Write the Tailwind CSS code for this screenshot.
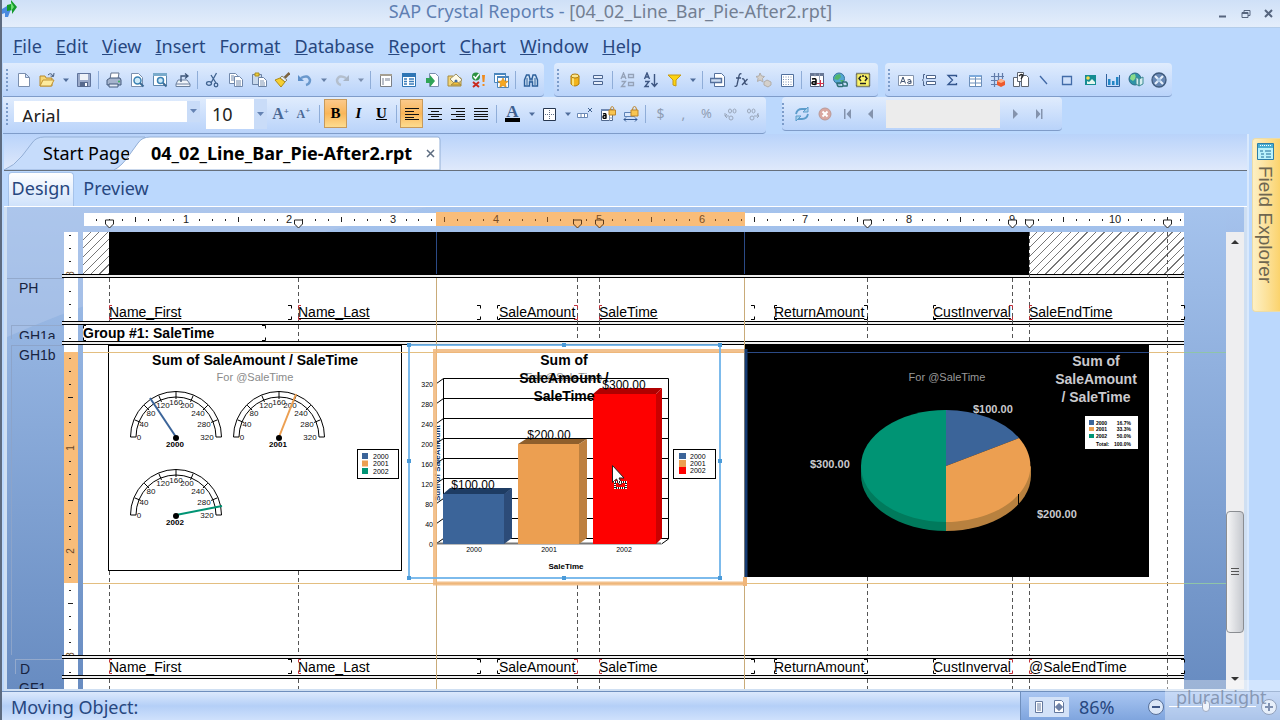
<!DOCTYPE html>
<html lang="en">
  <head>
    <meta charset="UTF-8" />
    <meta name="viewport" content="width=device-width, initial-scale=1.0" />
    <script src="https://cdn.jsdelivr.net/npm/@tailwindcss/browser@4"></script>
    <title>SAP Crystal Reports - [04_02_Line_Bar_Pie-After2.rpt]</title>
  </head>

  <body class="h-screen overflow-hidden bg-[#bbd8fd] font-['Noto_Sans','Open_Sans',sans-serif] text-[#27477f]">
    <div class="flex h-screen flex-col border-l-2 border-[#5d6b80]">
      <!-- Title bar -->
      <header class="flex h-7 flex-none items-center border-b border-[#b4cdea] bg-linear-to-b from-[#cfe0f7] to-[#e4eefb]">
        <svg class="size-5 flex-none self-start" viewBox="0 0 20 20">
          <path d="M0 9l5-3v4l4-1-3 8-3 0 0-4-3 1z" fill="#4a8be0" />
          <path d="M5 5l4-1V0l6 7-5 7V10l-5 1z" fill="#159a2c" />
          <path d="M9 2l3 5-3 4z" fill="#6be070" />
        </svg>
        <h1 class="flex-1 pb-[6px] pr-3 text-center text-[18px] leading-5 text-[#5f7fb2]">SAP Crystal Reports - <span class="text-[#737f92]">[04_02_Line_Bar_Pie-After2.rpt]</span></h1>
        <div class="flex text-[#56657e]">
          <button class="grid h-6 w-[23px] place-items-center" aria-label="Minimize"><svg class="size-3" viewBox="0 0 12 12"><path d="M2 8.500h7" stroke="currentColor" stroke-width="2" /></svg></button>
          <button class="grid h-6 w-[23px] place-items-center" aria-label="Restore"><svg class="size-3" viewBox="0 0 12 12" fill="none" stroke="currentColor"><path d="M4 4V2.500h6v5H8" /><path d="M2 4.500h6v5H2z M2 5.500h6" /></svg></button>
          <button class="grid h-6 w-[23px] place-items-center" aria-label="Close"><svg class="size-3" viewBox="0 0 12 12"><path d="M2 2l7 7M9 2L2 9" stroke="currentColor" stroke-width="2" /></svg></button>
        </div>
      </header>

      <!-- Menu -->
      <nav class="flex h-[35px] flex-none items-center gap-[14px] pl-[11px] pt-[2px] text-[18px]">
        <a href="#"><u>F</u>ile</a>
        <a href="#"><u>E</u>dit</a>
        <a href="#"><u>V</u>iew</a>
        <a href="#"><u>I</u>nsert</a>
        <a href="#">Form<u>a</u>t</a>
        <a href="#"><u>D</u>atabase</a>
        <a href="#"><u>R</u>eport</a>
        <a href="#"><u>C</u>hart</a>
        <a href="#"><u>W</u>indow</a>
        <a href="#"><u>H</u>elp</a>
      </nav>

      <!-- Toolbars, first row -->
      <div class="flex h-[34px] flex-none [&_button]:grid [&_button]:h-[26px] [&_button]:w-[23px] [&_button]:place-items-center [&_svg]:size-4 [&_i]:mx-[3px] [&_i]:h-[18px] [&_i]:w-px [&_i]:bg-[#8fadd8] [&_b]:mr-1 [&_b]:h-[22px] [&_b]:w-0 [&_b]:border-l-2 [&_b]:border-dotted [&_b]:border-[#7c9cca] [&_button.drop]:w-[14px]">
        <div class="ml-px flex w-[541px] items-center rounded-r border-b border-[#7f9cc9] bg-linear-to-b from-[#e0ecfd] to-[#b9d3fa] pl-[3px]">
          <b></b>
          <button aria-label="New"><svg viewBox="0 0 16 16"><path d="M2.500 1.500h7l4 4v9h-11z M9.500 1.500v4h4" fill="#fff" stroke="#7b8fae" /></svg></button>
          <button aria-label="Open"><svg viewBox="0 0 16 16"><path d="M1 14V4h5l1 2h6v8z" fill="#f7d774" stroke="#b8892a" /><path d="M1 14l3-6h11l-3 6z" fill="#fdeb9f" stroke="#c19334" /><path d="M9 3q3-3 5 1M15 1l-.5 3.500-3-.5" fill="none" stroke="#445a7c" /></svg></button>
          <button class="drop" aria-label="Open recent"><svg viewBox="0 0 16 16"><path d="M5 6.500h6l-3 3.500z" fill="#506d9b" /></svg></button>
          <button aria-label="Save"><svg viewBox="0 0 16 16"><path d="M1.500 1.500h13v13h-13z" fill="#9aa9c8" stroke="#60749c" /><path d="M4 2h8v6H4z" fill="#eef2f8" /><path d="M4 10h8v5H4z" fill="#586a8d" /><path d="M9 11h2v3H9z" fill="#fff" /></svg></button>
          <i></i>
          <button aria-label="Print"><svg viewBox="0 0 16 16"><path d="M5 1h8l-1 6H4z" fill="#fff" stroke="#64748f" /><path d="M1 8l3-2h10l1 2v5H1z" fill="#a5b4cd" stroke="#445a7c" /><path d="M3 12h9v3H3z" fill="#dfe8f5" stroke="#445a7c" /><circle cx="13" cy="9.500" r="1" fill="#36b45a" /></svg></button>
          <button aria-label="Print preview"><svg viewBox="0 0 16 16"><path d="M2.500 1.500h7l4 4v9h-11z" fill="#fff" stroke="#7b8fae" /><circle cx="8.500" cy="8.500" r="3.500" fill="#cfeaf8" stroke="#3b82b4" stroke-width="1.500" /><path d="M11 11l3.500 3.500" stroke="#3b6a94" stroke-width="2" /></svg></button>
          <button aria-label="HTML preview"><svg viewBox="0 0 16 16"><path d="M1.500 1.500h13v12h-13z" fill="#fff" stroke="#5f87ad" /><path d="M1 1h14v3H1z" fill="#79aacb" /><circle cx="8.500" cy="8.500" r="3" fill="#cfeaf8" stroke="#3b82b4" stroke-width="1.500" /><path d="M11 11l3.500 3.500" stroke="#3b6a94" stroke-width="2" /></svg></button>
          <button aria-label="Export"><svg viewBox="0 0 16 16" fill="none" stroke="#6a7f9d"><path d="M3 8h9l3 4v2.500H1V12z" fill="#f0f4fa" /><path d="M1 12h14" /><path d="M6 10V4h6M10 1.500L13 4l-3 2.500" stroke="#3d5578" stroke-width="1.300" /></svg></button>
          <i></i>
          <button aria-label="Cut"><svg viewBox="0 0 16 16" fill="none" stroke="#3f628f" stroke-width="1.300"><path d="M11.500 1L6 11M6 3l5 8" /><ellipse cx="4" cy="11.500" rx="2.500" ry="1.800" /><circle cx="11" cy="13" r="1.800" /></svg></button>
          <button aria-label="Copy"><svg viewBox="0 0 16 16" fill="#fff" stroke="#7188ab"><path d="M1.500 1.500h6l2 2v8h-8z" /><path d="M6.500 4.500h5l3 3v7h-8z" /><path d="M3 4h3M3 6h3M3 8h3M8 9h5M8 11h5M8 13h5" /></svg></button>
          <button aria-label="Paste"><svg viewBox="0 0 16 16"><path d="M1.500 2.500h9v10h-9z" fill="#c9d9ec" stroke="#6c83a5" /><path d="M4 1h4v3H4z" fill="#f0cd36" stroke="#a98d22" /><path d="M7.500 5.500h5l3 3v6h-8z" fill="#fff" stroke="#6c83a5" /><path d="M9 9h4M9 11h5M9 13h5" stroke="#7f95b5" /></svg></button>
          <button aria-label="Format painter"><svg viewBox="0 0 16 16"><path d="M15.500 1l-5 5" stroke="#7b6340" stroke-width="2.500" /><path d="M8 4l5 4-2 2-5-4z" fill="#e7eaf0" stroke="#8a8a70" /><path d="M1 8l5-2 5 4-4 5z" fill="#f6cf33" stroke="#af8a16" /></svg></button>
          <button aria-label="Undo"><svg viewBox="0 0 16 16"><path d="M4 6q7-4 9 2 0 4-4 5" fill="none" stroke="#6a98cc" stroke-width="2.500" /><path d="M1 3v6h6z" fill="#5d8fc9" /></svg></button>
          <button class="drop" aria-label="Undo list"><svg viewBox="0 0 16 16"><path d="M5 6.500h6l-3 3.500z" fill="#6680a8" /></svg></button>
          <button aria-label="Redo"><svg viewBox="0 0 16 16"><path d="M12 6q-7-4-9 2 0 4 4 5" fill="none" stroke="#b4bfcd" stroke-width="2.500" /><path d="M15 3v6H9z" fill="#a9b5c5" /></svg></button>
          <button class="drop" aria-label="Redo list"><svg viewBox="0 0 16 16"><path d="M5 6.500h6l-3 3.500z" fill="#7c90b0" /></svg></button>
          <i></i>
          <button aria-label="Toggle preview panel"><svg viewBox="0 0 16 16"><path d="M2.500 2.500h11v12h-11z" fill="#fff" stroke="#7b7f86" /><path d="M2 2h12v2H2z" fill="#a59f92" /><path d="M4 6h2v7H4zM7 6h5v3H7z" fill="#b9bec8" /></svg></button>
          <button aria-label="Field explorer"><svg viewBox="0 0 16 16"><path d="M1.500 1.500h13v13h-13z" fill="#fff" stroke="#2e75b5" /><path d="M1 1h14v4H1z" fill="#2e75b5" /><path d="M3 7h3M3 9.500h3M3 12h3M8 7h5M8 9.500h5M8 12h5" stroke="#3b7cba" stroke-width="1.300" /></svg></button>
          <button aria-label="Report explorer"><svg viewBox="0 0 16 16"><path d="M5.500 1.500h6l3 3v10h-9z" fill="#fff" stroke="#7b8fae" /><path d="M2 6h4V3l5 6-5 6v-4H2z" fill="#30a457" /></svg></button>
          <button aria-label="Repository explorer"><svg viewBox="0 0 16 16"><path d="M1 14V4h5l1 2h7v8z" fill="#f2d477" stroke="#a58a3f" /><path d="M3 7l6-5 6 6-6 5z" fill="#fffbe6" stroke="#9b9064" /><path d="M4 13l5-4 5 4z" fill="#f1bf39" stroke="#a58a3f" /><circle cx="9" cy="9" r="1.500" fill="#406ba5" /></svg></button>
          <button aria-label="Dependency checker"><svg viewBox="0 0 16 16"><circle cx="6" cy="4.500" r="4" fill="#2b9141" /><path d="M3.500 4l2 2.500L9 2" fill="none" stroke="#fff" stroke-width="1.500" /><path d="M3 10l6 5M9 10l-6 5" stroke="#c8291d" stroke-width="2" /><path d="M12 3h3l-.6 7h-1.800zM12.500 12h2v2h-2z" fill="#ef8a1d" /></svg></button>
          <button aria-label="Workbench"><svg viewBox="0 0 16 16"><path d="M1.500 1.500h11v9h-11zM4.500 4.500h11v11h-11z" fill="#fff" stroke="#4a86bd" /><path d="M1 1h12v2H1zM4 4h12v2H4z" fill="#4a86bd" /><path d="M10 6l1.500 3 3.500.4-2.600 2.300.8 3.500L10 13.500 6.800 15.200l.8-3.500L5 9.400 8.500 9z" fill="#f6a821" stroke="#c77d10" stroke-width=".6" /></svg></button>
          <i></i>
          <button aria-label="Find"><svg viewBox="0 0 16 16"><path d="M1.500 14V8l2-5h2.500l1 4h2l1-4h2.500l2 5v6h-5v-4h-3v4z" fill="#cfe2f5" stroke="#2c5f9a" stroke-width="1.400" /><path d="M7 7v3M9 7v3M4 6v7M12 6v7" stroke="#2c5f9a" /></svg></button>
        </div>

        <div class="ml-[10px] flex w-[324px] items-center rounded border-b border-[#7f9cc9] bg-linear-to-b from-[#e0ecfd] to-[#b9d3fa] pl-[3px]">
          <b></b>
          <button aria-label="Database expert"><svg viewBox="0 0 16 16"><path d="M4 4v8q4 4 8 0V4z" fill="#f2b41c" stroke="#b07c0b" /><path d="M5 5v8l2 1V5z" fill="#fbe27a" /><ellipse cx="8" cy="4" rx="4" ry="2" fill="#fbe58d" stroke="#b07c0b" /></svg></button>
          <button aria-label="Group expert"><svg viewBox="0 0 16 16" fill="#e6eefb" stroke="#4b6590"><path d="M3.500 3.500h9v3h-9zM3.500 9.500h9v3h-9z" /></svg></button>
          <i></i>
          <button aria-label="Group sort"><svg viewBox="0 0 16 16" fill="none" stroke="#95a2b8" stroke-width="1.300"><path d="M1 7l2.500-6L6 7M2 5h3M1.500 9.500h4l-4 5h4M8.500 2.500h5v3h-5zM8.500 10.500h5v3h-5z" /></svg></button>
          <button aria-label="Sort"><svg viewBox="0 0 16 16" fill="none" stroke="#3d5682" stroke-width="1.400"><path d="M1.500 7L4 1l2.500 6M2.500 5h3M2 9.500h4l-4 5h4M11.500 2v12M8.500 11l3 3.500 3-3.500" /></svg></button>
          <button aria-label="Select expert"><svg viewBox="0 0 16 16"><path d="M2 3h13l-5 5v6l-3-1V8z" fill="#fbd312" stroke="#c79a12" /></svg></button>
          <button class="drop" aria-label="Selection list"><svg viewBox="0 0 16 16"><path d="M5 6.500h6l-3 3.500z" fill="#506d9b" /></svg></button>
          <i></i>
          <button aria-label="Section expert"><svg viewBox="0 0 16 16" fill="#fff" stroke="#55709c"><path d="M4.500 1.500h7l3 3v10h-10z" /><path d="M.5 6.500h11v4H.5z" fill="#cddcf2" stroke-width="1.400" /></svg></button>
          <button aria-label="Formula workshop"><svg viewBox="0 0 16 16" fill="none" stroke="#3c5075" stroke-width="1.300"><path d="M8.500 2Q6.500 1 6 4L4 13q-.5 2-2.500 1M3 6h5M9 7q2-1 2.500 2l.5 2q.5 2 2.500 1M14.500 7L9 13" /></svg></button>
          <button aria-label="OLAP expert"><svg viewBox="0 0 16 16" fill="#d4d0cb" stroke="#b1adaa"><path d="M4 1l1.500 3 3 .5-2 2L7 10 4 8 1.500 9.500l.5-3-2-2 3-.5z" /><path d="M8 10l3-2 4 2v3l-3 2-4-2z" /></svg></button>
          <button aria-label="Grid"><svg viewBox="0 0 16 16"><path d="M2.500 2.500h12v12h-12z" fill="#fff" stroke="#52719e" /><path d="M4 5h9M4 7.500h9M4 10h9M4 12.500h9" stroke="#7e93b4" stroke-dasharray="1 1.500" /></svg></button>
          <i></i>
          <button aria-label="Format field"><svg viewBox="0 0 16 16"><path d="M1.500 1.500h13v13h-13z" fill="#fff" stroke="#4f5f7e" /><path d="M1 1h14v3H1z" fill="#697996" /><path d="M6 1.500v3M10.500 1.500v13M6 11v3" stroke="#9aa6ba" /><path d="M3 7q4-1 4 1v4q-4 1-4-1t4-1" fill="none" stroke="#000" stroke-width="1.500" /><path d="M8 11.500h7M11.500 8v7" stroke="#d4324a" /></svg></button>
          <button aria-label="Hyperlink"><svg viewBox="0 0 16 16"><circle cx="7" cy="6.500" r="5.500" fill="#53a6d1" stroke="#38749d" /><path d="M4 3l4-1 1 3-3 3-4-1zM8 8l4 0-2 3z" fill="#52b66b" /><path d="M5 11h4q2 0 2 2t-2 1.500H6.500Q5 14 5 11zM10 10h4q2 1 1 4h-4" fill="none" stroke="#2e6f74" stroke-width="1.400" /></svg></button>
          <button aria-label="Highlighting"><svg viewBox="0 0 16 16"><path d="M1.500 1.500h13v13h-13z" fill="#fbf36a" stroke="#222" stroke-width="1.500" stroke-dasharray="1 1" /><path d="M6 4L4 6.500 6 9M10 4l2 2.500L10 9M8 3v2M5 11.500h6" fill="none" stroke="#222" stroke-width="1.500" /></svg></button>
        </div>

        <div class="ml-[7px] flex w-[287px] items-center rounded border-b border-[#7f9cc9] bg-linear-to-b from-[#e0ecfd] to-[#b9d3fa] pl-[3px]">
          <b></b>
          <button aria-label="Text object"><svg viewBox="0 0 16 16"><path d="M.5 3.500h15v10H.5z" fill="#fff" stroke="#8494ad" /><path d="M2.500 11.500L5 5l2.500 6.500M3.500 9.500h3M9.500 8q3.500-1.500 3.500 1v2.500M13 9.500q-4 0-3.500 1.500t3.500 0" fill="none" stroke="#3c4f6e" /></svg></button>
          <button aria-label="Insert group"><svg viewBox="0 0 16 16" fill="#fff" stroke="#4d648a"><path d="M5.500 3.500h9v3h-9zM5.500 9.500h9v3h-9z" /><path d="M4 2.500H2.500v4L1.500 8l1 1.500v4H4" fill="none" /></svg></button>
          <button aria-label="Insert summary"><svg viewBox="0 0 16 16"><path d="M12.500 5V3.500H4L8.500 8 4 12.500h8.500V11" fill="none" stroke="#34568e" stroke-width="1.300" /></svg></button>
          <button aria-label="Insert cross-tab"><svg viewBox="0 0 16 16"><path d="M2.500 3.500h12v11h-12z" fill="#fff" stroke="#6c8fba" /><path d="M2.500 7h12M8.500 4v10M2.500 11h12" stroke="#6c8fba" /><path d="M2 3h12v2H2z" fill="#7eaadb" /></svg></button>
          <button aria-label="Insert OLAP grid"><svg viewBox="0 0 16 16"><path d="M1 4.500h13M1 8.500h9M1 12.500h7M4.500 1v14M8.500 1v9M12.500 1v6" stroke="#627caa" stroke-width="1.200" /><path d="M7 9l4-2 4 2v4l-4 2-4-2z" fill="#ee5a2d" /><path d="M7 9l4-2 4 2-4 2z" fill="#fcb58c" /></svg></button>
          <button aria-label="Insert subreport"><svg viewBox="0 0 16 16" fill="#fff" stroke="#5e6672"><path d="M.5 5.500h6v9h-6z" /><path d="M4.500.5h6v9h-6z" /><path d="M8.500 3.500h5l2 2v9h-7z" /><path d="M6 4q3-3 4 0l-2 3" fill="none" stroke="#222" stroke-width="1.300" /></svg></button>
          <button aria-label="Insert line"><svg viewBox="0 0 16 16"><path d="M4 4l7 8" stroke="#4068a6" stroke-width="1.300" /></svg></button>
          <button aria-label="Insert box"><svg viewBox="0 0 16 16"><path d="M3.500 4.500h9v8h-9z" fill="#cfe0fa" stroke="#426ba8" stroke-width="1.300" /></svg></button>
          <button aria-label="Insert picture"><svg viewBox="0 0 16 16"><path d="M3 3h11v10H3z" fill="#158c92" /><circle cx="6" cy="6" r="1.800" fill="#f8dc4a" /><path d="M5 12V9l2 1 3-3 3 3v2z" fill="#e6f7ee" /></svg></button>
          <button aria-label="Insert chart"><svg viewBox="0 0 16 16"><path d="M1.500 2v12.500h13V3" fill="none" stroke="#32629e" /><path d="M3 7h2.500v6H3zM7 9h2.500v4H7zM11 5h2.500v8H11z" fill="#2387c6" /></svg></button>
          <button aria-label="Insert map"><svg viewBox="0 0 16 16"><circle cx="7" cy="7" r="6" fill="#2f93a8" stroke="#2c6a86" /><path d="M3 3l4-1 1 4-3 3-3-2z" fill="#8bdc8a" /><path d="M8 5l3 2v7l-3-2zM11 7l4-2v7l-4 2z" fill="#d4edef" stroke="#3c8b92" /></svg></button>
          <button aria-label="Insert flash"><svg viewBox="0 0 16 16"><circle cx="8" cy="8" r="7" fill="#6787b3" stroke="#3f5a7c" stroke-width="1.300" /><path d="M4 4l8 8M12 4l-8 8" stroke="#e7f0fb" stroke-width="2.200" /><circle cx="8" cy="8" r="2" fill="#a9c8e8" /></svg></button>
        </div>
      </div>

      <!-- Toolbars, second row -->
      <div class="flex h-[37px] flex-none [&_button]:grid [&_button]:h-[29px] [&_button]:w-[23px] [&_button]:place-items-center [&_svg]:size-4 [&_i]:mx-[3px] [&_i:nth-of-type(odd)]:mx-1 [&_i]:h-[18px] [&_i]:w-px [&_i]:bg-[#8fadd8] [&_b]:mr-[6px] [&_b]:h-[22px] [&_b]:w-0 [&_b]:border-l-2 [&_b]:border-dotted [&_b]:border-[#7c9cca] [&_button.drop]:w-[13px]">
        <div class="ml-px flex w-[763px] items-center rounded-r border-b border-[#7f9cc9] bg-linear-to-b from-[#e0ecfd] to-[#b9d3fa] pb-[3px] pl-[3px]">
          <b></b>
          <div class="relative mr-[6px] mt-1 h-[21px] w-[186px] flex-none self-start overflow-hidden bg-white">
            <select aria-label="Font" class="h-[31px] w-full appearance-none border-r-[13px] border-[#c9dcf8] pl-2 text-[18px] leading-[31px] text-[#222]"><option>Arial</option></select>
            <svg class="pointer-events-none absolute right-0 top-[4px] !size-3" viewBox="0 0 12 12"><path d="M2 4h7L5.500 8z" fill="#6583b3" /></svg>
          </div>
          <div class="relative mr-[2px] h-[30px] w-[61px] flex-none bg-white">
            <select aria-label="Font size" class="h-[30px] w-full appearance-none border-r-[13px] border-[#c9dcf8] pl-[6px] text-[18px] leading-[30px] text-[#222]"><option>10</option></select>
            <svg class="pointer-events-none absolute right-0 top-[9px] !size-3" viewBox="0 0 12 12"><path d="M2 4h7L5.500 8z" fill="#6583b3" /></svg>
          </div>
          <button aria-label="Grow font" class="font-['Liberation_Serif',serif] text-[16px] font-bold text-[#4a6894]"><span>A<sup class="text-[9px]">+</sup></span></button>
          <button aria-label="Shrink font" class="font-['Liberation_Serif',serif] text-[12px] font-bold text-[#4a6894]"><span>A<sup class="text-[9px]">+</sup></span></button>
          <i></i>
          <button aria-label="Bold" class="border border-[#c79a5c] bg-linear-to-b from-[#fbc98a] via-[#f9b659] to-[#fddc8f] font-['Liberation_Serif',serif] text-[15px] font-bold text-black">B</button>
          <button aria-label="Italic" class="font-['Liberation_Serif',serif] text-[15px] font-bold italic text-black">I</button>
          <button aria-label="Underline" class="font-['Liberation_Serif',serif] text-[15px] font-bold text-black underline">U</button>
          <i></i>
          <button aria-label="Align left" class="border border-[#c79a5c] bg-linear-to-b from-[#fbc98a] via-[#f9b659] to-[#fddc8f]"><svg viewBox="0 0 16 16"><path d="M1 2.500h14M1 5.500h9M1 8.500h14M1 11.500h9M1 13.500h14" stroke="#111" /></svg></button>
          <button aria-label="Align center"><svg viewBox="0 0 16 16"><path d="M1 2.500h14M4 5.500h8M1 8.500h14M4 10.500h8M1 13.500h14" stroke="#111" /></svg></button>
          <button aria-label="Align right"><svg viewBox="0 0 16 16"><path d="M1 2.500h14M6 5.500h9M1 8.500h14M6 10.500h9M1 13.500h14" stroke="#111" /></svg></button>
          <button aria-label="Justify"><svg viewBox="0 0 16 16"><path d="M1 2.500h14M1 5.500h14M1 8.500h14M1 10.500h14M1 13.500h14" stroke="#111" /></svg></button>
          <i></i>
          <button aria-label="Font color" class="font-['Liberation_Serif',serif] text-[17px] font-bold text-[#3f608f]"><span class="h-4 border-b-4 border-black px-px leading-3">A</span></button>
          <button class="drop" aria-label="Font color list"><svg viewBox="0 0 16 16"><path d="M5 6.500h6l-3 3.500z" fill="#506d9b" /></svg></button>
          <button aria-label="Borders"><svg viewBox="0 0 16 16"><path d="M2.500 2.500h12v12h-12z" fill="#fff" stroke="#26364f" /><path d="M4 8.500h9M8.500 4v9" stroke="#5f6e86" stroke-dasharray="1 1" /></svg></button>
          <button class="drop" aria-label="Border list"><svg viewBox="0 0 16 16"><path d="M5 6.500h6l-3 3.500z" fill="#506d9b" /></svg></button>
          <button aria-label="Suppress"><svg viewBox="0 0 16 16" fill="#fff" stroke="#6b88b4"><path d="M.5 7.500h10v4H.5zM4 7.500v4M7.500 7.500v4" /><path d="M11 2l4 4M15 2l-4 4" stroke="#3f608f" /></svg></button>
          <button aria-label="Lock format"><svg viewBox="0 0 16 16"><path d="M1.500 3.500h11v11h-11z" fill="#fff" stroke="#51688d" /><path d="M1 3h12v2H1z" fill="#6f88b1" /><path d="M9.500 5v10M9 12h4" stroke="#8799b5" /><path d="M3 8q3-1 3 1v3q-3 1-3-1t3-1" fill="none" stroke="#000" stroke-width="1.400" /><path d="M9 4h6.500v5H9z" fill="#f8c551" stroke="#bd852a" /><path d="M10.500 4q0-3.500 1.700-3.500T14 4" fill="none" stroke="#bd852a" /></svg></button>
          <button aria-label="Lock size"><svg viewBox="0 0 16 16"><path d="M1.500 6.500h10v4h-10z" fill="#dbe8fb" stroke="#5e83b8" /><path d="M1 13.500h13M3 11.500l-2 2 2 2M12 11.500l2 2-2 2" fill="none" stroke="#33578f" /><path d="M8 4h7v6H8z" fill="#f8c551" stroke="#bd852a" /><path d="M9.500 4q0-3.500 2-3.500t2 3.500" fill="none" stroke="#bd852a" /></svg></button>
          <i></i>
          <button aria-label="Currency" class="text-[14px] text-[#8f9db3]">$</button>
          <button aria-label="Thousands" class="text-[14px] text-[#8f9db3]">,</button>
          <button aria-label="Percent" class="text-[13px] text-[#8f9db3]">%</button>
          <button aria-label="Increase decimals"><svg viewBox="0 0 16 16" fill="none" stroke="#9aa7bb"><ellipse cx="8" cy="5" rx="1.500" ry="2" /><ellipse cx="12.500" cy="5" rx="1.500" ry="2" /><path d="M3 7v3h4M5 8l-2 2 2 2" /><ellipse cx="9" cy="12" rx="2" ry="2" /></svg></button>
          <button aria-label="Decrease decimals"><svg viewBox="0 0 16 16" fill="none" stroke="#9aa7bb"><ellipse cx="4" cy="5" rx="1.500" ry="2" /><ellipse cx="8.500" cy="5" rx="1.500" ry="2" /><path d="M13 7v3H9M12 8l2 2-2 2" /><ellipse cx="7" cy="12" rx="2" ry="2" /></svg></button>
        </div>

        <div class="ml-4 flex h-[34px] items-center rounded border-b border-[#7f9cc9] bg-linear-to-b from-[#e0ecfd] to-[#b9d3fa]">
          <b></b>
          <button aria-label="Refresh"><svg viewBox="0 0 16 16" fill="none" stroke="#5c9ccb" stroke-width="1.800"><path d="M2 8q1-5 6-5h4M14 8q-1 5-6 5H4" /><path d="M14 1v5H9zM2 15v-5h5z" fill="#a9d2ec" stroke-width="1" /></svg></button>
          <button aria-label="Stop"><svg viewBox="0 0 16 16"><circle cx="8" cy="8" r="6" fill="#d9a7a0" stroke="#b99a99" /><path d="M5.500 5.500l5 5M10.500 5.500l-5 5" stroke="#fff" stroke-width="2" /></svg></button>
          <button aria-label="First page"><svg viewBox="0 0 16 16" fill="#8493ad"><path d="M4 3h1.500v10H4zM11 3v10L6.500 8z" /></svg></button>
          <button aria-label="Previous page"><svg viewBox="0 0 16 16" fill="#8493ad"><path d="M10 3v10L5 8z" /></svg></button>
          <input aria-label="Page" disabled class="mx-1 h-[28px] w-[114px] bg-[#ececec] px-1 text-sm" />
          <button aria-label="Next page"><svg viewBox="0 0 16 16" fill="#8493ad"><path d="M5 3v10l5-5z" /></svg></button>
          <button aria-label="Last page" class="mr-[12px]"><svg viewBox="0 0 16 16" fill="#8493ad"><path d="M5 3v10l4.500-5zM10 3h1.500v10H10z" /></svg></button>
        </div>
      </div>

      <div class="flex min-h-0 flex-1">
        <div class="flex min-w-0 flex-1 flex-col pl-[2px]">
          <!-- Document tabs -->
          <div class="relative flex h-[37px] flex-none items-end border-b border-[#66707c] bg-linear-to-b from-[#b9d3fa] to-[#dfe9fb] text-[18px] text-black">
            <svg class="absolute bottom-0 left-0 h-[34px] w-[440px]" viewBox="0 0 440 34">
              <path d="M0 34Q10 30 18 20L28 7Q32 1 40 1h101v33z" fill="#c6dcfb" stroke="#93afd6" />
              <path d="M110 34Q118 30 126 18L134 7Q138 1 146 1H434q2 0 2 3v30z" fill="#fff" stroke="#93afd6" />
            </svg>
            <button class="relative ml-[39px] h-[33px] w-[86px] overflow-hidden whitespace-nowrap text-left">Start Page</button>
            <button class="relative ml-[22px] h-[33px] w-[267px] whitespace-nowrap text-left font-bold">04_02_Line_Bar_Pie-After2.rpt</button>
            <button class="relative ml-[7px] h-8 text-[#5d6c80]" aria-label="Close tab"><svg class="size-3" viewBox="0 0 12 12"><path d="M2 2l7 7M9 2L2 9" stroke="currentColor" stroke-width="1.500" /></svg></button>
          </div>

          <!-- View tabs -->
          <div class="flex h-9 flex-none items-end border-b border-white pl-1 text-[18px]">
            <button class="h-[34px] w-[66px] whitespace-nowrap rounded-t border border-b-0 border-[#a6c3ea] bg-linear-to-b from-white to-[#cfe2fb] pb-[2px]">Design</button>
            <button class="h-[34px] w-[84px] pb-[2px]">Preview</button>
          </div>

          <!-- Report designer -->
          <main class="flex min-h-0 flex-1 border-x-[3px] border-b-2 border-[#cfdff2] font-['Liberation_Sans',sans-serif] text-black">
            <div class="relative flex min-w-0 flex-1 flex-col overflow-hidden bg-linear-to-b from-[#a5c3ed] to-[#688cc1]">
              <svg class="absolute left-0 top-0 h-[130px] w-full" viewBox="0 0 1219 130" preserveAspectRatio="none"><path d="M0 130Q160 60 420 0H0z" fill="#b6c9ea" opacity=".45" /></svg>

              <div class="relative h-[25px] flex-none pl-[77px] pr-[42px]">
                <svg id="ruler" class="mt-[5px] h-[20px] w-full text-[11px]" fill="#222">
                  <rect y="1" width="100%" height="13" fill="#fff" />
                  <rect x="352" width="309" height="14" fill="#f9bd7a" />
                </svg>
              </div>

              <div class="relative flex h-[42px] flex-none pl-[57px] pr-[42px]">
                <svg data-vruler="42" data-first class="h-full w-[14px] bg-white text-[10px]"></svg>
                <div class="ml-[5px] w-[26px] bg-[repeating-linear-gradient(135deg,#fff_0_5px,#777_5px_6px)]"></div>
                <div class="w-[920px] bg-black"></div>
                <div class="flex-1 bg-[repeating-linear-gradient(135deg,#fff_0_5px,#777_5px_6px)]"></div>
              </div>
              <div class="relative ml-[55px] mr-[42px] h-1 flex-none border-y border-black bg-[#eee]"></div>

              <section class="relative flex h-[43px] flex-none pr-[42px]">
                <h2 class="w-[57px] border-t border-[#93a9cc] pl-3 text-[14px] leading-[19px] text-[#17233f]">PH</h2>
                <svg data-vruler="43" class="h-full w-[14px] bg-white text-[10px]"></svg>
                <div class="relative ml-[5px] flex-1 bg-white text-[14px] leading-4 [&>span]:underline [&>span]:underline-offset-1">
                  <span class="absolute bottom-px left-[26px]">Name_First</span>
                  <span class="absolute bottom-px left-[215px]">Name_Last</span>
                  <span class="absolute bottom-px left-[416px]">SaleAmount</span>
                  <span class="absolute bottom-px left-[516px]">SaleTime</span>
                  <span class="absolute bottom-px left-[691px]">ReturnAmount</span>
                  <span class="absolute bottom-px left-[850px]">CustInverval</span>
                  <span class="absolute bottom-px left-[946px]">SaleEndTime</span>
                </div>
              </section>
              <div class="relative ml-[55px] mr-[42px] h-1 flex-none border-y border-black bg-[#eee]"></div>

              <section class="relative flex h-4 flex-none pr-[42px]">
                <h2 class="ml-1 h-[14px] w-[53px] overflow-hidden border-l border-t border-[#93a9cc] pl-[7px] pt-[2px] text-[14px] leading-4 text-[#17233f]">GH1a</h2>
                <svg data-vruler="16" class="h-full w-[14px] bg-white text-[10px]"></svg>
                <div class="relative ml-[5px] flex-1 bg-white text-[14px] font-bold leading-4">Group #1: SaleTime</div>
              </section>
              <div class="relative ml-[55px] mr-[42px] h-1 flex-none border-y border-black bg-[#eee]"></div>

              <section class="relative flex h-[310px] flex-none pr-[42px]">
                <h2 class="ml-1 w-[53px] border-l border-t border-[#8ca4ca] pl-[7px] text-[14px] leading-[19px] text-[#17233f]">GH1b</h2>
                <svg data-vruler="310" class="h-full w-[14px] bg-white text-[10px]"><rect y="7" width="14" height="231" fill="#f9bd7a" /></svg>
                <div class="ml-[5px] flex-1 bg-white"></div>
              </section>
              <div class="relative ml-[55px] mr-[42px] h-1 flex-none border-y border-black bg-[#eee]"></div>

              <section class="relative flex h-4 flex-none pr-[42px]">
                <h2 class="ml-2 h-[15px] w-[49px] overflow-hidden border-l border-t border-[#93a9cc] pl-1 pt-px text-[14px] leading-4 text-[#17233f]">D</h2>
                <svg data-vruler="16" class="h-full w-[14px] bg-white text-[10px]"></svg>
                <div class="relative ml-[5px] flex-1 bg-white text-[14px] leading-4">
                  <span class="absolute left-[26px]">Name_First</span>
                  <span class="absolute left-[215px]">Name_Last</span>
                  <span class="absolute left-[416px]">SaleAmount</span>
                  <span class="absolute left-[516px]">SaleTime</span>
                  <span class="absolute left-[691px]">ReturnAmount</span>
                  <span class="absolute left-[850px]">CustInverval</span>
                  <span class="absolute left-[946px]">@SaleEndTime</span>
                </div>
              </section>
              <div class="relative ml-[55px] mr-[42px] h-1 flex-none border-y border-black bg-[#eee]"></div>

              <section class="relative flex min-h-0 flex-1 overflow-hidden pr-[42px]">
                <h2 class="w-[57px] pl-3 pt-px text-[14px] leading-4 text-[#17233f]">GF1</h2>
                <svg class="h-full w-[14px] bg-white"></svg>
                <div class="ml-[5px] flex-1 bg-white"></div>
              </section>

              <!-- Free canvas: guides, objects and selection. Units are window pixels. -->
              <svg id="canvas" class="absolute left-[76px] top-[25px] h-[458px] w-[1143px] font-['Liberation_Sans',sans-serif]" viewBox="83 232 1143 458" fill="none">
                <g stroke="#555" stroke-dasharray="4 3">
                  <path d="M109.500 278V321M109.500 571V655M109.500 679V690M298.500 278V321M298.500 325V341M298.500 571V655M298.500 679V690M577.500 278V341M577.500 585V655M577.500 679V690M599.500 278V341M599.500 585V655M599.500 679V690M867.500 278V341M867.500 577V655M867.500 679V690M1012.500 278V341M1012.500 577V655M1012.500 679V690M1029.500 232V341M1029.500 577V655M1029.500 679V690M1167.500 232V690" />
                </g>
                <g id="corners" stroke="#000"></g>

                <!-- Gauge chart -->
                <rect x="108.500" y="345.500" width="293" height="225" fill="#fff" stroke="#000" />
                <text x="255" y="365" text-anchor="middle" class="fill-black text-[14px] font-bold">Sum of SaleAmount / SaleTime</text>
                <text x="255" y="381" text-anchor="middle" class="fill-[#8a8a8a] text-[11px]">For @SaleTime</text>
                <g id="gauges" class="text-[8px]"></g>
                <rect x="357.500" y="449.500" width="41" height="29" fill="#fff" stroke="#000" />
                <path d="M362 453h6v6h-6z" fill="#3b6499" /><path d="M362 460.500h6v6h-6z" fill="#ec9f51" /><path d="M362 468h6v6h-6z" fill="#009474" />
                <g class="fill-black text-[7px]"><text x="373" y="459">2000</text><text x="373" y="466">2001</text><text x="373" y="474">2002</text></g>

                <!-- Bar chart -->
                <path id="walls" stroke="#000" d="M436.500 383V544M443.500 378.500V539M668.500 378.500V539L661.500 544" />
                <g id="axis" class="fill-black text-[7px]" text-anchor="end"></g>
                <path d="M436 543.500H661" stroke="#777" stroke-width="2" />
                <path d="M443 494l7-6h62l-7 6z" fill="#1e3c63" /><path d="M504 494l8-6v50l-8 6z" fill="#2c4b78" /><path d="M443 494h61v50h-61z" fill="#3b6499" />
                <path d="M518 444l8-5h61l-8 5z" fill="#8f5f2c" /><path d="M579 444l8-5v99l-8 6z" fill="#bd803f" /><path d="M518 444h61v100h-61z" fill="#ec9f51" />
                <path d="M593 394l7-6h62l-6 6z" fill="#b00000" /><path d="M656 394l6-6v150l-6 6z" fill="#cb0000" /><path d="M593 394h63v150h-63z" fill="#fe0000" />
                <g class="fill-black text-[12px]" text-anchor="middle"><text x="473" y="489">$100.00</text><text x="549" y="439">$200.00</text><text x="624" y="389">$300.00</text></g>
                <g class="fill-black text-[7px]" text-anchor="middle"><text x="474" y="552">2000</text><text x="549" y="552">2001</text><text x="624" y="552">2002</text></g>
                <text x="566" y="569" text-anchor="middle" class="fill-black text-[8px] font-bold">SaleTime</text>
                <text transform="translate(440 463) rotate(-90)" text-anchor="middle" class="fill-[#0c2f63] text-[8px] font-bold">Sum of SaleAmount</text>
                <text x="564" y="381" text-anchor="middle" class="fill-[#8a8a8a] text-[11px]">For @SaleTime</text>
                <g class="fill-black text-[14px] font-bold" text-anchor="middle"><text x="564" y="365">Sum of</text><text x="564" y="383">SaleAmount /</text><text x="564" y="401">SaleTime</text></g>
                <rect x="673.500" y="449.500" width="42" height="29" fill="#fff" stroke="#000" />
                <path d="M679 453h7v6h-7z" fill="#3b6499" /><path d="M679 460h7v7h-7z" fill="#ec9f51" /><path d="M679 467h7v7h-7z" fill="#fe0000" />
                <g class="fill-black text-[7px]"><text x="690" y="459">2000</text><text x="690" y="466">2001</text><text x="690" y="473">2002</text></g>

                <!-- Pie chart -->
                <path d="M745 345h404v232H745z" fill="#000" />
                <path d="M861 466v9a85 56 0 0 0 85 56v-9z" fill="#007a5c" />
                <path d="M1031 466v9a85 56 0 0 1-85 56v-9z" fill="#b8813f" />
                <path d="M946 466V410a85 56 0 0 0 0 112z" fill="#009474" />
                <path d="M946 466V410a85 56 0 0 1 73 28z" fill="#3b6499" />
                <path d="M946 466l73-28a85 56 0 0 1-73 84z" fill="#ec9f51" />
                <path d="M1018.500 494v10" stroke="#000" />
                <text x="947" y="381" text-anchor="middle" class="fill-[#999] text-[11px]">For @SaleTime</text>
                <g class="fill-[#cacace] text-[11px] font-bold"><text x="973" y="413">$100.00</text><text x="1037" y="518">$200.00</text><text x="810" y="468">$300.00</text></g>
                <g class="fill-[#cacace] text-[14px] font-bold" text-anchor="middle"><text x="1096" y="366">Sum of</text><text x="1096" y="384">SaleAmount</text><text x="1096" y="402">/ SaleTime</text></g>
                <path d="M1085 416h53v33h-53z" fill="#fff" />
                <path d="M1089 420h5v5h-5z" fill="#3b6499" /><path d="M1089 427h5v4h-5z" fill="#ec9f51" /><path d="M1089 434h5v4h-5z" fill="#009474" />
                <g class="fill-black text-[5px] font-bold"><text x="1096" y="425">2000</text><text x="1096" y="431">2001</text><text x="1096" y="438">2002</text><text x="1096" y="446">Total:</text></g>
                <g class="fill-black text-[5px] font-bold" text-anchor="end"><text x="1131" y="425">16.7%</text><text x="1131" y="431">33.3%</text><text x="1131" y="438">50.0%</text><text x="1131" y="446">100.0%</text></g>

                <!-- Drag outline and selection -->
                <path d="M436.500 278V690M744.500 278V690" stroke="#c9ab79" />
                <path d="M436.500 232V274M744.500 232V274M745 352.500H1149" stroke="#2b4a86" />
                <path d="M83 352.500H745M1149 352.500H1184M83 583.500H1184" stroke="#e3be80" />
                <path d="M1184 352.500H1226M1184 583.500H1226" stroke="#8fc4a8" />
                <path d="M744 583.500H435V351H744" stroke="#f0b67a" stroke-width="4" stroke-opacity=".85" />
                <path d="M746 349V577" stroke="#153a72" stroke-width="3" />
                <path d="M745 577v9" stroke="#f0b67a" stroke-width="4" />
                <path d="M409 345H720V578H409z" stroke="#6fb4ea" stroke-width="2" stroke-opacity=".9" />
                <path d="M407 343h4v4h-4zM562 343h4v4h-4zM718 343h4v4h-4zM407 459h4v4h-4zM718 459h4v4h-4zM407 576h4v4h-4zM562 576h4v4h-4zM718 576h4v4h-4z" fill="#4a9ad8" />
                <path d="M612.500 465.500v17l4-3.500 3 6 2.500-1.500-3-5.500h5z" fill="#fff" stroke="#222" />
                <path d="M615 482h11v6h-11z" stroke="#fff" stroke-width="2" /><path d="M615 482h11v6h-11z" stroke="#222" stroke-width="2" stroke-dasharray="1 1" />
              </svg>
            </div>

            <!-- Scrollbar -->
            <div class="flex w-[18px] flex-none flex-col items-center bg-[#eeeef0]">
              <div class="h-[25px] w-full flex-none bg-linear-to-b from-[#a5c3ed] to-[#a2bfea]"></div>
              <button class="grid h-5 w-full place-items-center" aria-label="Scroll up"><svg class="size-2" viewBox="0 0 8 8"><path d="M0 6h8L4 2z" fill="#333" /></svg></button>
              <div class="flex-[262]"></div>
              <div class="grid w-full flex-[122] place-items-center rounded-sm border border-[#8a8d92] bg-linear-to-r from-[#f5f5f6] to-[#c6c9cf]"><svg class="h-3 w-2" viewBox="0 0 8 12"><path d="M0 2.500h8M0 5.500h8M0 8.500h8" stroke="#555" /></svg></div>
              <div class="flex-[36]"></div>
              <button class="grid h-5 w-full place-items-center" aria-label="Scroll down"><svg class="size-2" viewBox="0 0 8 8"><path d="M0 2h8L4 6z" fill="#333" /></svg></button>
            </div>
          </main>
        </div>

        <!-- Docked panel -->
        <aside class="w-[33px] flex-none border-l-2 border-[#d9e9fd] pl-[3px] pt-1">
          <button class="flex h-[174px] w-full flex-col items-center gap-[6px] rounded-l border border-r-0 border-[#ecdca8] bg-linear-to-r from-[#fdf0c4] to-[#fbd36c] pr-[3px] pt-1 font-['Liberation_Sans',sans-serif] text-[19px] leading-5 text-[#6e6650]">
            <svg class="size-[17px] flex-none" viewBox="0 0 17 17"><path d="M.5.5h16v16H.5z" fill="#b9f2fb" stroke="#2b7da8" /><path d="M1 1h15v4H1z" fill="#4aaed2" /><path d="M3 2.500h11" stroke="#fff" stroke-dasharray="1 1" /><path d="M3 8h3M4 11h3M4 14h3M8 8h6M9 11h5M9 14h5" stroke="#1f6d98" /></svg>
            <span class="whitespace-nowrap [writing-mode:vertical-rl]">Field Explorer</span>
          </button>
        </aside>
      </div>

      <!-- Status bar -->
      <footer class="relative flex h-[29px] flex-none items-center border-t border-[#6f8fbd] bg-linear-to-b from-[#dce9fc] via-[#b4cff7] to-[#cfe1fc] pl-[9px] text-[18px]">
        <p class="flex-1 pt-[3px]">Moving Object:</p>
        <div class="flex h-full w-[260px] items-center border-l border-[#6f8fbd] bg-linear-to-b from-[#a9c6f2] to-[#7fa5de] pl-2 pt-px">
          <button class="grid h-5 w-5 place-items-center bg-[#d3e2f8]" aria-label="Single page"><svg class="size-4" viewBox="0 0 16 16"><path d="M4.500 2.500h7v11h-7z" fill="#fff" stroke="#63789e" /><path d="M6 5h4M6 7h4M6 9h4M6 11h4" stroke="#63789e" /></svg></button>
          <button class="grid h-5 w-5 place-items-center bg-[#d3e2f8]" aria-label="Fit page"><svg class="size-4" viewBox="0 0 16 16"><path d="M3.500 1.500h7l2 2v10h-9z" fill="#fff" stroke="#63789e" /><path d="M8 4v8M4 8h8M6 6h4v4H6z" fill="none" stroke="#3d5688" /></svg></button>
          <output class="ml-[10px] w-[68px] pt-px">86%</output>
          <button aria-label="Zoom out"><svg class="size-[18px]" viewBox="0 0 18 18"><circle cx="9" cy="9" r="7.500" fill="#dbe7f8" stroke="#587099" /><path d="M5 9h8" stroke="#3d5688" stroke-width="2" /></svg></button>
          <label class="relative h-[18px] flex-1"><input type="range" aria-label="Zoom" value="42" class="absolute inset-x-1 top-[8px] h-px appearance-none bg-white [&::-webkit-slider-thumb]:h-3 [&::-webkit-slider-thumb]:w-2 [&::-webkit-slider-thumb]:appearance-none [&::-webkit-slider-thumb]:rounded-sm [&::-webkit-slider-thumb]:border [&::-webkit-slider-thumb]:border-[#6a7ea4] [&::-webkit-slider-thumb]:bg-[#e8eff9]" /></label>
          <button class="mr-[2px]" aria-label="Zoom in"><svg class="size-[18px]" viewBox="0 0 18 18"><circle cx="9" cy="9" r="7.500" fill="#dbe7f8" stroke="#587099" /><path d="M5 9h8M9 5v8" stroke="#3d5688" stroke-width="2" /></svg></button>
        </div>
        <div class="pointer-events-none absolute bottom-0 right-0 h-10 w-[115px] bg-white/35 pl-[11px] pt-1 text-[18px] text-[#7787a3]/80">pluralsight</div>
      </footer>
    </div>

    <script>
      const NS = "http://www.w3.org/2000/svg";
      const INCH = 103.2;

      function add(parent, tag, attrs, text) {
        const el = document.createElementNS(NS, tag);
        for (const key in attrs) el.setAttribute(key, attrs[key]);
        if (text !== undefined) el.textContent = text;
        parent.appendChild(el);
        return el;
      }

      // horizontal ruler
      const ruler = document.getElementById("ruler");
      for (let i = 1; i < 86; i++) {
        const x = Math.round((i * INCH) / 8) - 1;
        const fill = x > 352 && x < 661 ? "#7a4d22" : "#222";
        if (i % 8 === 0) {
          add(ruler, "text", { x: x, y: 11, "text-anchor": "middle", fill: fill }, i / 8);
        } else {
          const h = i % 4 === 0 ? 5 : 2;
          add(ruler, "rect", { x: x, y: h === 5 ? 5 : 7, width: 1, height: h, fill: fill });
        }
      }
      // column guides
      [109, 298, 577, 599, 867, 1012, 1029, 1167].forEach((g) => {
        const x = g - 84 + 0.5;
        const hot = g === 577 || g === 599;
        add(ruler, "path", { d: `M${x - 4} 8h8v4l-4 4-4-4z`, fill: hot ? "#f9bd7a" : "#fff", stroke: hot ? "#5c3a1a" : "#222" });
      });

      // vertical rulers restart in each section
      document.querySelectorAll("[data-vruler]").forEach((svg) => {
        const height = Number(svg.dataset.vruler);
        const first = "first" in svg.dataset;
        const count = first ? 4 : Math.floor(((height + 3) * 8) / INCH);
        for (let i = 1; i <= count; i++) {
          const y = first ? i * 13 - 10 : Math.round((i * INCH) / 8);
          if (first ? i === 4 : i % 8 === 0) {
            add(svg, "text", { transform: `translate(10 ${y}) rotate(-90)`, "text-anchor": "middle", fill: "#6b4a2a" }, first ? 8 : i / 8);
          } else {
            const w = i % 4 === 0 ? 5 : 2;
            add(svg, "rect", { x: w === 5 ? 4 : 5, y: y, width: w, height: 1, fill: "#222" });
          }
        }
      });

      // corner marks of the fields: [left, right, red left, red right]
      const corners = document.getElementById("corners");
      const fields = [[109, 291, 1, 0], [298, 480, 1, 0], [497, 577, 0, 1], [599, 754, 1, 0], [774, 867, 0, 0], [933, 1012, 0, 1], [1029, 1184, 1, 0]];
      function mark(x, dir, top, bottom, red) {
        add(corners, "path", { d: `M${x + dir * 3} ${top}.5H${x}.5v3M${x + dir * 3} ${bottom}.5H${x}.5v-3`, stroke: red ? "#c0303a" : "#000" });
      }
      [[305, 319], [659, 673]].forEach(([top, bottom]) => {
        fields.forEach(([l, r, redL, redR]) => {
          mark(l, 1, top, bottom, redL);
          mark(r, -1, top, bottom, redR);
        });
      });
      mark(83, 1, 325, 340, 0);
      mark(265, -1, 325, 340, 0);

      // gauges
      const gauges = document.getElementById("gauges");
      const labels = [[0, -37, 1], [40, -32, -12], [80, -25, -23], [120, -13, -31], [160, 0, -34], [200, 11, -31], [240, 22, -23], [280, 28, -12], [320, 31, 1]];
      [
        { cx: 176, cy: 437, name: "2000", color: "#3b6499", dx: -26, dy: -39 },
        { cx: 279, cy: 437, name: "2001", color: "#ec9f51", dx: 17, dy: -43 },
        { cx: 176, cy: 515, name: "2002", color: "#009474", dx: 46, dy: -9 },
      ].forEach((g) => {
        let d = `M${g.cx - 45.5} ${g.cy}a45.500 45.500 0 0 1 91 0h-5.500a40 40 0 0 0 -80 0z`;
        for (let k = 1; k < 8; k++) {
          const a = Math.PI - (k * Math.PI) / 8;
          d += `M${g.cx + 38 * Math.cos(a)} ${g.cy - 38 * Math.sin(a)}L${g.cx + 45 * Math.cos(a)} ${g.cy - 45 * Math.sin(a)}`;
        }
        add(gauges, "path", { d: d, stroke: "#000" });
        labels.forEach(([t, x, y]) => add(gauges, "text", { x: g.cx + x, y: g.cy + y + 2, "text-anchor": "middle", fill: "#111" }, t));
        add(gauges, "path", { d: `M${g.cx} ${g.cy}l${g.dx} ${g.dy}`, stroke: g.color, "stroke-width": 2 });
        add(gauges, "circle", { cx: g.cx, cy: g.cy + 1, r: 3, fill: "#000" });
        add(gauges, "text", { x: g.cx - 1, y: g.cy + 10, "text-anchor": "middle", fill: "#000", "font-weight": "bold" }, g.name);
      });

      // value axis of the bar chart
      const walls = document.getElementById("walls");
      const axis = document.getElementById("axis");
      let lines = walls.getAttribute("d");
      for (let k = 0; k <= 8; k++) {
        const y = 378.5 + k * 20;
        lines += `M436.500 ${y + 5}L443.500 ${y}H668.500`;
        add(axis, "text", { x: 433, y: y + 8 }, 320 - k * 40);
      }
      walls.setAttribute("d", lines);
    </script>
  </body>
</html>
